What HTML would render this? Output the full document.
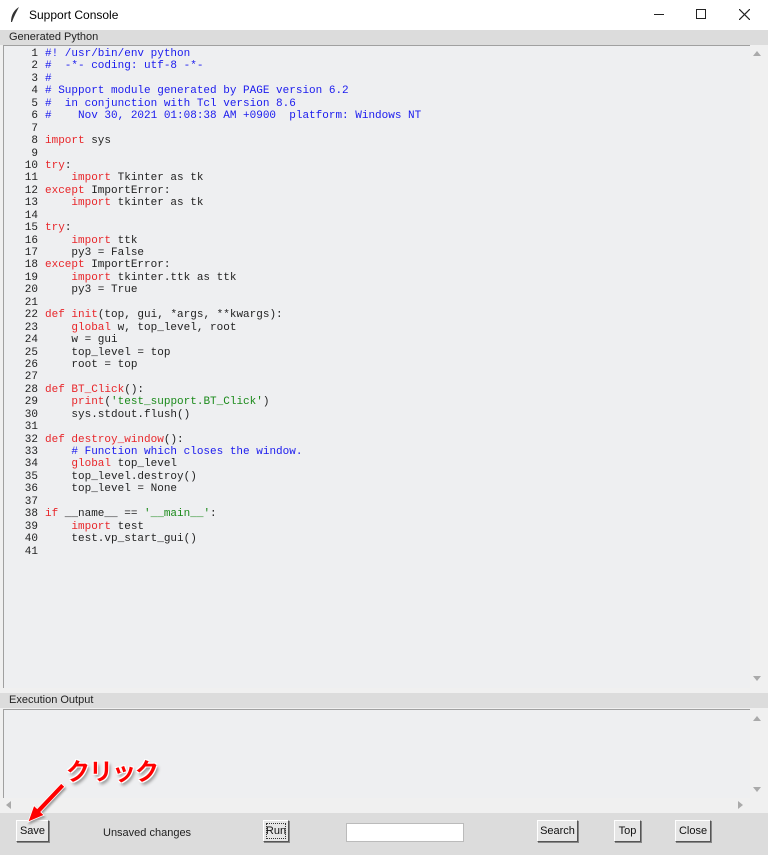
<!DOCTYPE html>
<html><head><meta charset="utf-8"><style>
*{margin:0;padding:0;box-sizing:border-box}
body{width:768px;height:855px;overflow:hidden;background:#f0f0f0;font-family:"Liberation Sans",sans-serif;position:relative}
.title{position:absolute;left:0;top:0;width:768px;height:30px;background:#fff;font-size:12px;color:#000}
.title .t{position:absolute;left:29px;top:8px}
.lbl{position:absolute;left:0;width:768px;height:15px;background:#dcdcdc;font-size:11px;color:#222;padding-left:9px;line-height:15px}
.box{position:absolute;left:3px;background:#eeeff1;border-top:1px solid #a0a0a0;border-left:1px solid #a0a0a0}
pre{font-family:"Liberation Mono",monospace;font-size:11px;line-height:12.43px;color:#222;position:absolute;top:48px;left:0}
.n{display:inline-block;width:38px;text-align:right;margin-right:7px;color:#222}
.k{color:#e8262a}.c{color:#1a1aee}.s{color:#1a8a1a}
.vs{position:absolute;right:2px;width:16px;background:#f0f0f0}
.btn{position:absolute;top:820px;height:22px;background:#e6e6e6;border:1px solid #fff;border-right-color:#555;border-bottom-color:#555;font-size:11px;text-align:center;line-height:20px;color:#111;box-shadow:1px 1px 0 #888}
.tri{position:absolute;width:0;height:0}
</style></head><body>
<div class="title">
<svg style="position:absolute;left:9px;top:6px" width="12" height="18" viewBox="0 0 12 18"><path d="M10 1 C5 4 2 9 2 16 L3 16 C5 10 8 5 10 1Z" fill="#333"/></svg>
<span class="t">Support Console</span>
<div style="position:absolute;left:654px;top:14px;width:10px;height:1px;background:#222"></div>
<div style="position:absolute;left:696px;top:9px;width:10px;height:10px;border:1px solid #222"></div>
<svg style="position:absolute;left:739px;top:9px" width="11" height="11"><path d="M0 0L11 11M11 0L0 11" stroke="#222" stroke-width="1.2"/></svg>
</div>
<div class="lbl" style="top:30px">Generated Python</div>
<div class="box" style="top:45px;width:747px;height:643px"></div>
<div class="vs" style="top:46px;height:642px"></div>
<div class="tri" style="left:753px;top:51px;border-left:4px solid transparent;border-right:4px solid transparent;border-bottom:5px solid #aaa"></div>
<div class="tri" style="left:753px;top:676px;border-left:4px solid transparent;border-right:4px solid transparent;border-top:5px solid #aaa"></div>
<pre><span class="n">1</span><span class="c">#! /usr/bin/env python</span>
<span class="n">2</span><span class="c">#  -*- coding: utf-8 -*-</span>
<span class="n">3</span><span class="c">#</span>
<span class="n">4</span><span class="c"># Support module generated by PAGE version 6.2</span>
<span class="n">5</span><span class="c">#  in conjunction with Tcl version 8.6</span>
<span class="n">6</span><span class="c">#    Nov 30, 2021 01:08:38 AM +0900  platform: Windows NT</span>
<span class="n">7</span>
<span class="n">8</span><span class="k">import</span> sys
<span class="n">9</span>
<span class="n">10</span><span class="k">try</span>:
<span class="n">11</span>    <span class="k">import</span> Tkinter as tk
<span class="n">12</span><span class="k">except</span> ImportError:
<span class="n">13</span>    <span class="k">import</span> tkinter as tk
<span class="n">14</span>
<span class="n">15</span><span class="k">try</span>:
<span class="n">16</span>    <span class="k">import</span> ttk
<span class="n">17</span>    py3 = False
<span class="n">18</span><span class="k">except</span> ImportError:
<span class="n">19</span>    <span class="k">import</span> tkinter.ttk as ttk
<span class="n">20</span>    py3 = True
<span class="n">21</span>
<span class="n">22</span><span class="k">def</span> <span class="k">init</span>(top, gui, *args, **kwargs):
<span class="n">23</span>    <span class="k">global</span> w, top_level, root
<span class="n">24</span>    w = gui
<span class="n">25</span>    top_level = top
<span class="n">26</span>    root = top
<span class="n">27</span>
<span class="n">28</span><span class="k">def</span> <span class="k">BT_Click</span>():
<span class="n">29</span>    <span class="k">print</span>(<span class="s">'test_support.BT_Click'</span>)
<span class="n">30</span>    sys.stdout.flush()
<span class="n">31</span>
<span class="n">32</span><span class="k">def</span> <span class="k">destroy_window</span>():
<span class="n">33</span>    <span class="c"># Function which closes the window.</span>
<span class="n">34</span>    <span class="k">global</span> top_level
<span class="n">35</span>    top_level.destroy()
<span class="n">36</span>    top_level = None
<span class="n">37</span>
<span class="n">38</span><span class="k">if</span> __name__ == <span class="s">'__main__'</span>:
<span class="n">39</span>    <span class="k">import</span> test
<span class="n">40</span>    test.vp_start_gui()
<span class="n">41</span></pre>
<div class="lbl" style="top:693px">Execution Output</div>
<div class="box" style="top:709px;width:747px;height:89px"></div>
<div class="vs" style="top:710px;height:88px"></div>
<div class="tri" style="left:753px;top:716px;border-left:4px solid transparent;border-right:4px solid transparent;border-bottom:5px solid #aaa"></div>
<div class="tri" style="left:753px;top:787px;border-left:4px solid transparent;border-right:4px solid transparent;border-top:5px solid #aaa"></div>
<div style="position:absolute;left:3px;top:798px;width:747px;height:15px;background:#f0f0f0"></div>
<div class="tri" style="left:6px;top:801px;border-top:4px solid transparent;border-bottom:4px solid transparent;border-right:5px solid #aaa"></div>
<div class="tri" style="left:738px;top:801px;border-top:4px solid transparent;border-bottom:4px solid transparent;border-left:5px solid #aaa"></div>
<div style="position:absolute;left:0;top:813px;width:768px;height:42px;background:#dcdcdc"></div>
<div class="btn" style="left:16px;width:33px">Save</div>
<div style="position:absolute;left:103px;top:827px;font-size:11px;color:#222">Unsaved changes</div>
<div class="btn" style="left:263px;width:26px;outline:1px dotted #333;outline-offset:-4px">Run</div>
<div style="position:absolute;left:346px;top:823px;width:118px;height:19px;background:#fff;border:1px solid #bbb"></div>
<div class="btn" style="left:537px;width:41px">Search</div>
<div class="btn" style="left:614px;width:27px">Top</div>
<div class="btn" style="left:675px;width:36px">Close</div>
<div style="position:absolute;left:66px;top:752px;font-family:'Noto Sans CJK JP',sans-serif;font-size:24px;font-weight:bold;color:#f00;text-shadow:-1px -1px 0 #fff,1px -1px 0 #fff,-1px 1px 0 #fff,1px 1px 0 #fff,2px 3px 3px #888;letter-spacing:-1px">クリック</div>
<svg style="position:absolute;left:15px;top:782px" width="55" height="45"><polygon points="13,40 18.9,23.5 22.2,26.6 46.2,1.3 49.8,4.7 25.8,30 29.1,33.1" fill="#f00" stroke="#fff" stroke-width="0.8" style="filter:drop-shadow(1px 2px 1px #999)"/></svg>
</body></html>
